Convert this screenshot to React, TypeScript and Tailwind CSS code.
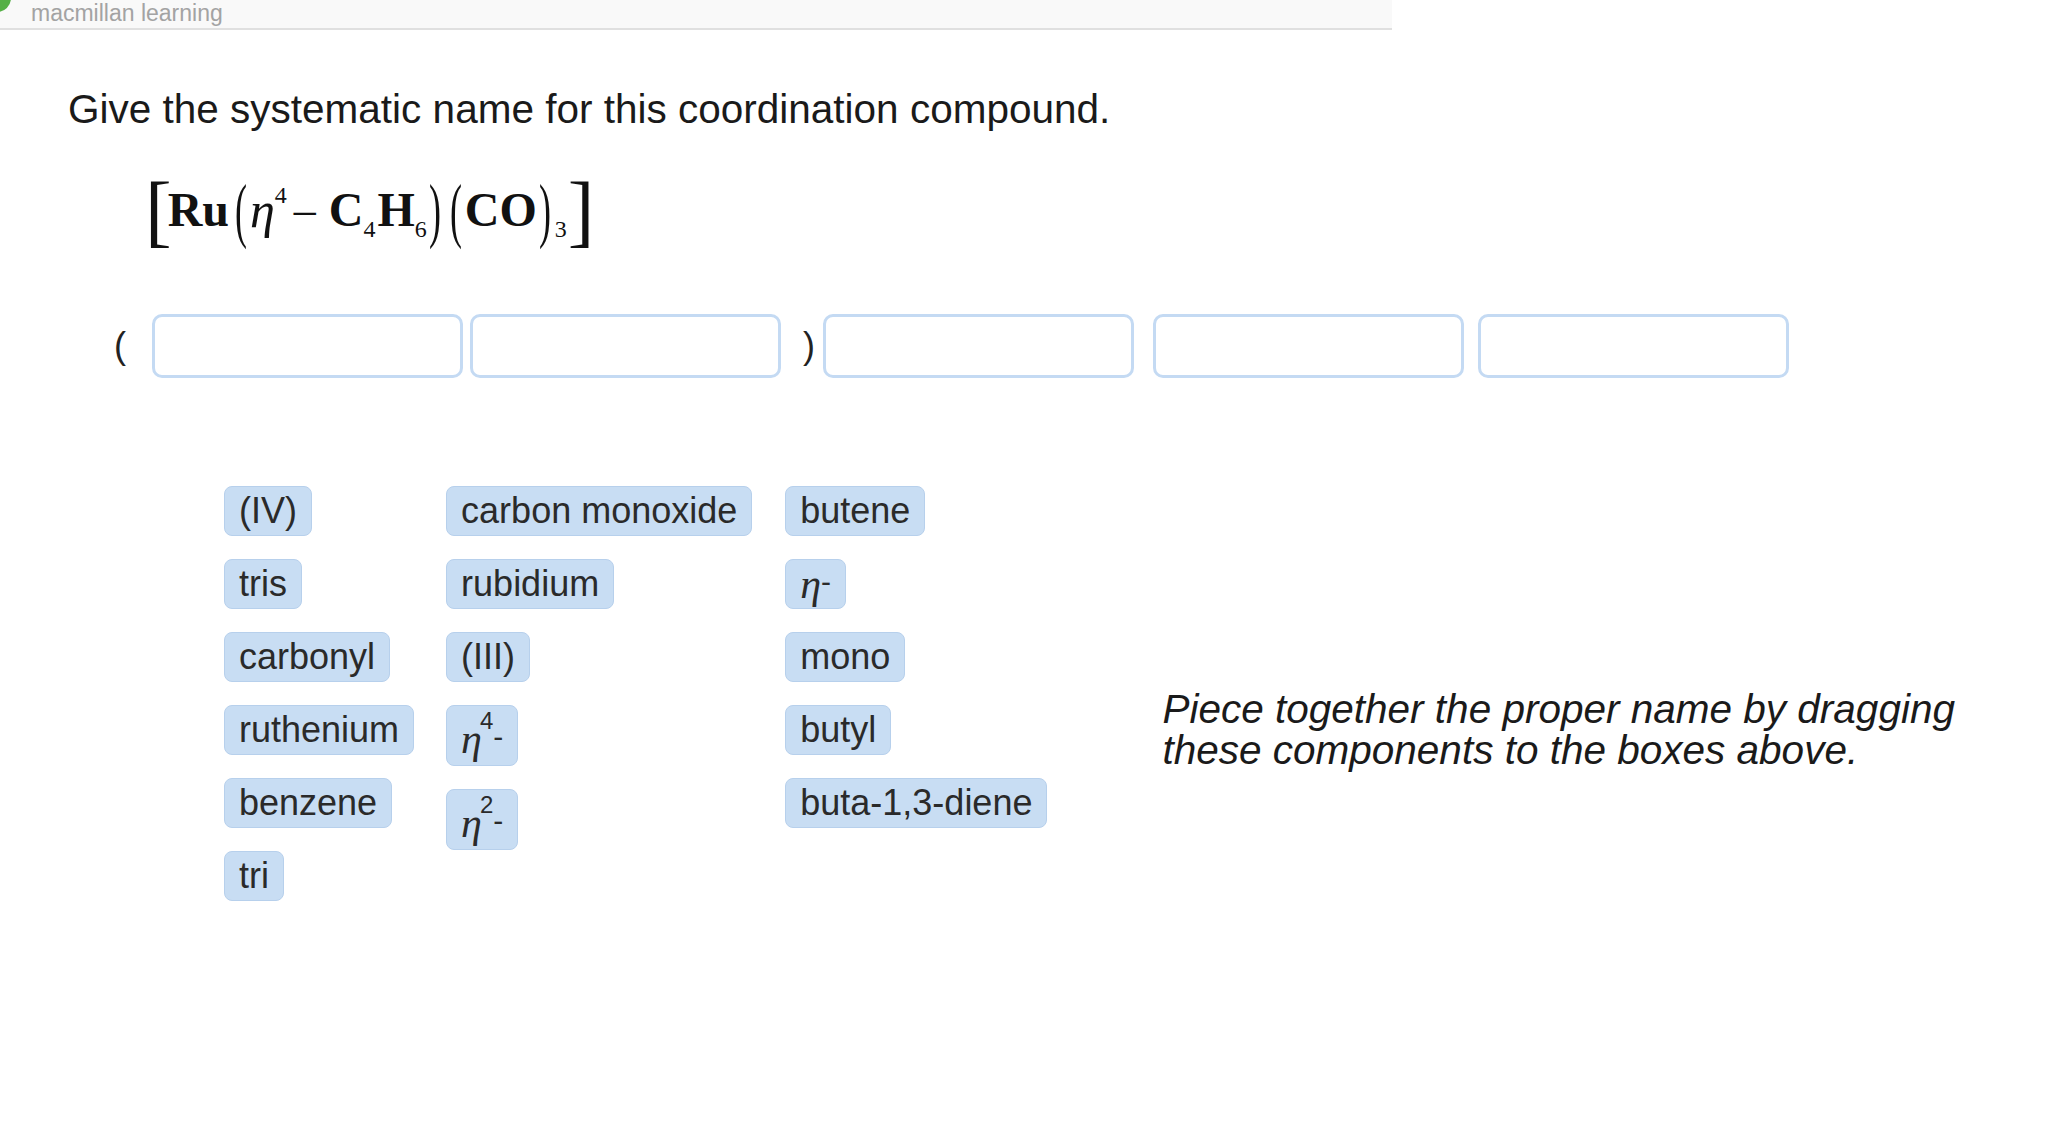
import React from "react";

const col1 = ["(IV)", "tris", "carbonyl", "ruthenium", "benzene", "tri"];
const col3 = ["butene", "η-", "mono", "butyl", "buta-1,3-diene"];

function Chip({ children, tall }: { children: React.ReactNode; tall?: boolean }) {
  return (
    <div
      className={
        "flex items-end rounded-[8px] border border-[#b7d0ec] bg-[#c8ddf3] px-[14px] text-[36px] leading-[40px] text-[#2a2a2a] " +
        (tall ? "h-[61px] pb-[6px]" : "h-[50px] pb-[4px]")
      }
    >
      {children}
    </div>
  );
}

function Eta({ sup }: { sup?: string }) {
  return (
    <span className="flex items-start">
      <span className="font-['Liberation_Serif',serif] italic text-[42px] leading-[40px]">η</span>
      {sup && <span className="-ml-[2px] -mt-[10px] text-[24px] leading-[24px]">{sup}</span>}
      <span className="text-[30px] leading-[36px]">-</span>
    </span>
  );
}

function AnswerBox({ className = "" }: { className?: string }) {
  return <div className={"h-[64px] w-[311px] rounded-[10px] border-[3px] border-[#c4daf3] bg-white " + className} />;
}

export default function App() {
  return (
    <div className="relative h-[1147px] w-[2046px] overflow-hidden bg-white font-['Liberation_Sans',Arial,sans-serif] text-[#1d1d1d]">
      {/* header strip */}
      <div className="flex h-[30px] w-[1392px] items-start overflow-hidden border-b-2 border-[#e0e0e0] bg-[#f9f9f9]">
        <div className="-ml-[17px] -mt-[16px] h-[28px] w-[28px] shrink-0 rounded-full bg-[#55b046]" />
        <span className="ml-[20px] mt-[1px] text-[23px] leading-[25px] text-[#a3a3a3]">macmillan learning</span>
      </div>

      <div className="pl-[68px]">
        <p className="mt-[56px] text-[40.5px] leading-[46px] text-[#1a1a1a]">
          Give the systematic name for this coordination compound.
        </p>

        {/* formula */}
        <div className="ml-[77px] mt-[38px] flex h-[80px] items-center font-['Liberation_Serif',serif] text-[#111]">
          <span className="-mr-[4px] text-[80px] leading-[80px] font-light">[</span>
          <span className="text-[48px] font-bold leading-[50px]">Ru</span>
          <span className="inline-block scale-x-[0.5] text-[72px] leading-[70px]">(</span>
          <span className="-ml-[3px] text-[50px] italic leading-[50px]">η</span>
          <span className="-mt-[30px] text-[24px] leading-[24px]">4</span>
          <span className="ml-[7px] text-[44px] leading-[46px]">–</span>
          <span className="ml-[13px] text-[48px] font-bold leading-[50px]">C</span>
          <span className="mt-[38px] text-[24px] leading-[24px]">4</span>
          <span className="ml-[2px] text-[48px] font-bold leading-[50px]">H</span>
          <span className="mt-[38px] text-[24px] leading-[24px]">6</span>
          <span className="-ml-[4px] inline-block scale-x-[0.5] text-[72px] leading-[70px]">)</span>
          <span className="-ml-[3px] inline-block scale-x-[0.5] text-[72px] leading-[70px]">(</span>
          <span className="-ml-[3px] text-[48px] font-bold leading-[50px]">CO</span>
          <span className="-ml-[4px] inline-block scale-x-[0.5] text-[72px] leading-[70px]">)</span>
          <span className="-ml-[2px] mt-[38px] text-[24px] leading-[24px]">3</span>
          <span className="ml-[1px] text-[80px] leading-[80px] font-light">]</span>
        </div>

        {/* answer boxes */}
        <div className="mt-[64px] flex items-center">
          <span className="ml-[46px] text-[36px] leading-[40px] text-[#222]">(</span>
          <AnswerBox className="ml-[26px]" />
          <AnswerBox className="ml-[7px]" />
          <span className="ml-[22px] text-[36px] leading-[40px] text-[#222]">)</span>
          <AnswerBox className="ml-[8px]" />
          <AnswerBox className="ml-[19px]" />
          <AnswerBox className="ml-[14px]" />
        </div>

        {/* draggable pieces */}
        <div className="ml-[156px] mt-[108px] flex items-start">
          <div className="flex flex-col items-start gap-[23px]">
            {col1.map((t) => (
              <Chip key={t}>{t}</Chip>
            ))}
          </div>
          <div className="ml-[32px] flex flex-col items-start gap-[23px]">
            <Chip>carbon monoxide</Chip>
            <Chip>rubidium</Chip>
            <Chip>(III)</Chip>
            <Chip tall>
              <Eta sup="4" />
            </Chip>
            <Chip tall>
              <Eta sup="2" />
            </Chip>
          </div>
          <div className="ml-[33px] flex flex-col items-start gap-[23px]">
            {col3.map((t) =>
              t === "η-" ? (
                <Chip key={t}>
                  <Eta />
                </Chip>
              ) : (
                <Chip key={t}>{t}</Chip>
              )
            )}
          </div>
          <p className="ml-[115px] mt-[203px] text-[40.5px] italic leading-[41px] text-[#1a1a1a]">
            Piece together the proper name by dragging
            <br />
            these components to the boxes above.
          </p>
        </div>
      </div>
    </div>
  );
}
